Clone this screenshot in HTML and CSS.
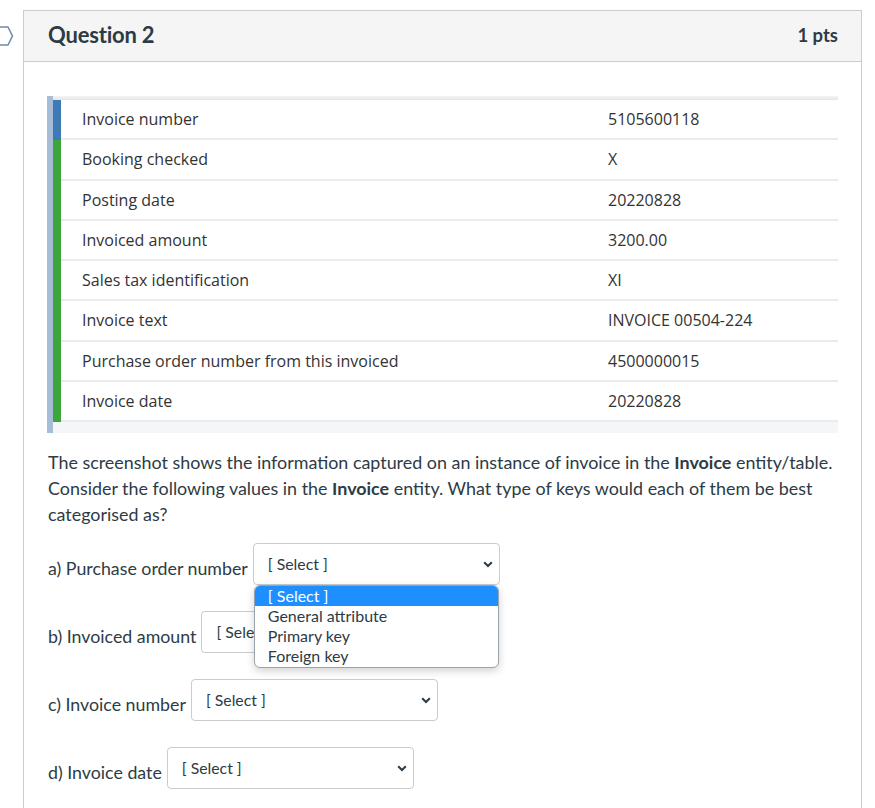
FILE: index.html
```html
<!DOCTYPE html>
<html lang="en">
<head>
<meta charset="utf-8">
<link rel="stylesheet" href="styles.css">
<title>Question 2</title>
</head>
<body>
<div class="page">
  <svg class="flag" width="14" height="22" viewBox="0 0 14 22"><path d="M-2 2 H8 L12.5 11 L8 20 H-2" fill="none" stroke="#6b8cab" stroke-width="1.6" stroke-linejoin="round"/></svg>
  <div class="card">
    <div class="card-head">
      <h2 class="title">Question 2</h2>
      <span class="pts">1 pts</span>
    </div>
    <div class="card-body">
      <div class="shot">
        <div class="shot-top"></div>
        <div class="row"><span class="mark blue"></span><span class="lab">Invoice number</span><span class="val">5105600118</span></div>
        <div class="row"><span class="mark"></span><span class="lab">Booking checked</span><span class="val">X</span></div>
        <div class="row"><span class="mark"></span><span class="lab">Posting date</span><span class="val">20220828</span></div>
        <div class="row"><span class="mark"></span><span class="lab">Invoiced amount</span><span class="val">3200.00</span></div>
        <div class="row"><span class="mark"></span><span class="lab">Sales tax identification</span><span class="val">XI</span></div>
        <div class="row"><span class="mark"></span><span class="lab">Invoice text</span><span class="val">INVOICE 00504-224</span></div>
        <div class="row"><span class="mark"></span><span class="lab">Purchase order number from this invoiced</span><span class="val">4500000015</span></div>
        <div class="row"><span class="mark"></span><span class="lab">Invoice date</span><span class="val">20220828</span></div>
        <div class="shot-bottom"></div>
      </div>
      <p class="text">The screenshot shows the information captured on an instance of invoice in the <b>Invoice</b> entity/table. Consider the following values in the <b>Invoice</b> entity. What type of keys would each of them be best categorised as?</p>
      <div class="answers">
        <div class="ans">
          <span class="alab">a) Purchase order number</span>
          <div class="sel-wrap">
            <div class="sel"><span>[ Select ]</span><svg class="chev" width="10" height="7" viewBox="0 0 10 7"><path d="M1.2 1.2 L5 5 L8.8 1.2" fill="none" stroke="#2d3b45" stroke-width="2"/></svg></div>
            <ul class="menu">
              <li class="hi">[ Select ]</li>
              <li>General attribute</li>
              <li>Primary key</li>
              <li>Foreign key</li>
            </ul>
          </div>
        </div>
        <div class="ans">
          <span class="alab">b) Invoiced amount</span>
          <div class="sel"><span>[ Select ]</span><svg class="chev" width="10" height="7" viewBox="0 0 10 7"><path d="M1.2 1.2 L5 5 L8.8 1.2" fill="none" stroke="#2d3b45" stroke-width="2"/></svg></div>
        </div>
        <div class="ans">
          <span class="alab">c) Invoice number</span>
          <div class="sel"><span>[ Select ]</span><svg class="chev" width="10" height="7" viewBox="0 0 10 7"><path d="M1.2 1.2 L5 5 L8.8 1.2" fill="none" stroke="#2d3b45" stroke-width="2"/></svg></div>
        </div>
        <div class="ans">
          <span class="alab">d) Invoice date</span>
          <div class="sel"><span>[ Select ]</span><svg class="chev" width="10" height="7" viewBox="0 0 10 7"><path d="M1.2 1.2 L5 5 L8.8 1.2" fill="none" stroke="#2d3b45" stroke-width="2"/></svg></div>
        </div>
      </div>
    </div>
  </div>
</div>
</body>
</html>
```

FILE: styles.css
```css
html, body {
  margin: 0;
  padding: 0;
  background: #fff;
  font-family: Lato, "Open Sans", sans-serif;
  color: #2d3b45;
  overflow: hidden;
}
.page {
  position: relative;
  padding: 10px 0 0 23px;
}
.flag {
  position: absolute;
  left: 0;
  top: 25px;
}
.card {
  width: 837px;
  border: 1px solid #c7cdd1;
  border-bottom: none;
  min-height: 820px;
}
.card-head {
  height: 51px;
  box-sizing: border-box;
  background: #f5f5f5;
  border-bottom: 1px solid #c7cdd1;
  display: flex;
  align-items: center;
  justify-content: space-between;
  padding: 0 23px 3px 24px;
}
.title {
  margin: 0;
  font-size: 22px;
  font-weight: 700;
  letter-spacing: -0.2px;
  color: #2d3b45;
}
.pts {
  font-size: 18.5px;
  font-weight: 700;
  color: #2d3b45;
}
.card-body {
  padding: 34px 23px 0 23px;
}
.shot {
  width: 791px;
  background: #fff;
  border-left: 6px solid #a7bcd6;
  box-sizing: border-box;
  font-family: "Open Sans", "Noto Sans", sans-serif;
  font-size: 16px;
  color: #333;
}
.shot-top {
  height: 4px;
  background: linear-gradient(#f4f4f4, #e6e6e6);
}
.shot-bottom {
  height: 11px;
  background: #f5f6f7;
}
.row {
  display: flex;
  align-items: center;
  height: 38.25px;
  border-bottom: 2px solid #ebebeb;
}
.mark {
  width: 8px;
  height: calc(100% + 2px);
  background: #3ca63c;
  align-self: flex-start;
}
.mark.blue {
  background: #3e7bb5;
}
.lab {
  padding-left: 21px;
  width: 526px;
}
.val {
  flex: 1;
}
.text {
  margin: 16px 0 0 1px;
  font-size: 17.9px;
  line-height: 26px;
  color: #2d3b45;
}
.text b {
  font-weight: 700;
}
.answers {
  margin-top: 16px;
  display: flex;
  flex-direction: column;
  gap: 26px;
  padding-left: 1px;
}
.ans {
  display: flex;
  align-items: center;
  gap: 5px;
  font-size: 17.8px;
}
.alab {
  padding-top: 8px;
}
.sel-wrap {
  position: relative;
}
.sel {
  width: 247px;
  height: 42px;
  box-sizing: border-box;
  border: 1px solid #c7cdd1;
  border-radius: 4px;
  background: #fff;
  display: flex;
  align-items: center;
  justify-content: space-between;
  padding: 0 6px 2px 14px;
  font-size: 15.8px;
  color: #2d3b45;
}
.chev {
  margin-top: 3px;
}
.menu {
  position: absolute;
  left: 1px;
  top: 42px;
  width: 245px;
  box-sizing: border-box;
  margin: 0;
  padding: 0 0 1px 0;
  list-style: none;
  background: #fff;
  border: 1px solid #9aa3aa;
  border-radius: 6px;
  box-shadow: 0 3px 8px rgba(0, 0, 0, 0.18);
  overflow: hidden;
  z-index: 5;
  font-size: 16px;
}
.menu li {
  height: 20px;
  line-height: 20px;
  padding-left: 13px;
  color: #2d3b45;
}
.menu li.hi {
  background: #1e8fff;
  color: #fff;
}
```
